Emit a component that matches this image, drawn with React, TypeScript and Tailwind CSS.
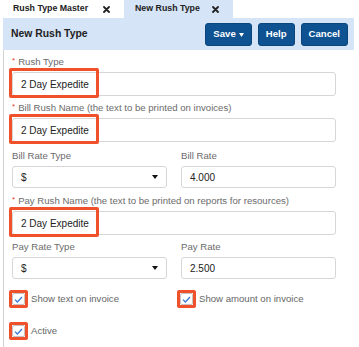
import React from "react";

const font = "font-['Liberation_Sans',Arial,sans-serif]";

function TabClose() {
    return (
        <svg width="7" height="7" viewBox="0 0 7 7" className="shrink-0">
            <path d="M1 1L6 6M6 1L1 6" stroke="#222" strokeWidth="1.8" strokeLinecap="round" />
        </svg>
    );
}

function Highlight({ className }: { className: string }) {
    return <div className={`absolute border-[3px] border-[#f0502a] rounded-[2px] pointer-events-none ${className}`} />;
}

function Label({ text, required }: { text: string; required?: boolean }) {
    return (
        <div className="h-[12px] leading-[12px] text-[9.6px] text-[#6b6b6b] mb-[4px] flex items-start">
            {required && <span className="text-[#e53935] text-[8px] leading-[10px] mr-[3px]">*</span>}
            <span>{text}</span>
        </div>
    );
}

function TextInput({ value, highlight, h = "h-[24px]" }: { value: string; highlight?: boolean; h?: string }) {
    return (
        <div className={`relative ${h} border border-[#d6d6d6] rounded-[3px] bg-white flex items-center pl-[8px] text-[10px] text-[#222]`}>
            {value}
            {highlight && <Highlight className="left-[-4px] top-[-5px] w-[90px] h-[30px]" />}
        </div>
    );
}

function Select({ value }: { value: string }) {
    return (
        <div className="h-[22px] border border-[#d6d6d6] rounded-[3px] bg-white flex items-center justify-between pl-[8px] pr-[8px] text-[10px] text-[#222]">
            <span>{value}</span>
            <svg width="6" height="4" viewBox="0 0 6 4">
                <path d="M0 0H6L3 4Z" fill="#111" />
            </svg>
        </div>
    );
}

function Checkbox({ label }: { label: string }) {
    return (
        <div className="flex items-center h-[18px]">
            <div className="relative w-[13px] h-[12px] border border-[#c4c4c4] rounded-[2px] bg-white flex items-center justify-center">
                <svg width="9" height="7" viewBox="0 0 9 7">
                    <path d="M1 3.6L3.4 6L8 1" stroke="#3a7bd5" strokeWidth="1.3" fill="none" />
                </svg>
                <Highlight className="left-[-4px] top-[-4px] w-[19px] h-[18px]" />
            </div>
            <span className="ml-[6px] text-[9.6px] text-[#666]">{label}</span>
        </div>
    );
}

function Button({ children }: { children: React.ReactNode }) {
    return (
        <button className="h-[23px] px-[7px] rounded-[3px] bg-[#0e5291] border border-[#0a457c] text-white text-[9.6px] font-bold flex items-center gap-[3px]">
            {children}
        </button>
    );
}

export default function App() {
    return (
        <div className={`w-[359px] h-[347px] bg-white overflow-hidden ${font}`}>
            {/* Tabs */}
            <div className="flex h-[18px]">
                <div className="w-[124px] flex items-center justify-between pl-[13px] pr-[14px] text-[8.8px] font-bold text-[#222]">
                    <span>Rush Type Master</span>
                    <TabClose />
                </div>
                <div className="w-[109px] bg-[#d5e4f7] flex items-center justify-between pl-[11px] pr-[14px] text-[8.8px] font-bold text-[#222]">
                    <span>New Rush Type</span>
                    <TabClose />
                </div>
            </div>

            <div className="ml-[3px] w-[351px]">
                {/* Header */}
                <div className="h-[32px] bg-[#d5e4f7] flex items-center justify-between pl-[8px] pr-[6px]">
                    <span className="text-[10.4px] font-bold text-[#222]">New Rush Type</span>
                    <div className="flex items-center gap-[6px] pt-[1px]">
                        <Button>
                            Save
                            <svg width="5" height="4" viewBox="0 0 5 4">
                                <path d="M0 0H5L2.5 4Z" fill="#fff" />
                            </svg>
                        </Button>
                        <Button>Help</Button>
                        <Button>Cancel</Button>
                    </div>
                </div>

                {/* Form */}
                <div className="border-l border-[#d2d2d2] h-[297px] pl-[8px] pr-[18px]">
                    <div className="pt-[6px]">
                        <Label text="Rush Type" required />
                        <TextInput value="2 Day Expedite" highlight />
                    </div>
                    <div className="mt-[6px]">
                        <Label text="Bill Rush Name (the text to be printed on invoices)" required />
                        <TextInput value="2 Day Expedite" highlight />
                    </div>
                    <div className="mt-[8px] grid grid-cols-2 gap-[14px]">
                        <div>
                            <Label text="Bill Rate Type" />
                            <Select value="$" />
                        </div>
                        <div>
                            <Label text="Bill Rate" />
                            <TextInput value="4.000" h="h-[22px]" />
                        </div>
                    </div>
                    <div className="mt-[7px]">
                        <Label text="Pay Rush Name (the text to be printed on reports for resources)" required />
                        <TextInput value="2 Day Expedite" highlight />
                    </div>
                    <div className="mt-[6px] grid grid-cols-2 gap-[14px]">
                        <div>
                            <Label text="Pay Rate Type" />
                            <Select value="$" />
                        </div>
                        <div>
                            <Label text="Pay Rate" />
                            <TextInput value="2.500" h="h-[22px]" />
                        </div>
                    </div>
                    <div className="mt-[11px] grid grid-cols-2 gap-[14px]">
                        <Checkbox label="Show text on invoice" />
                        <div className="-ml-[1px]">
                            <Checkbox label="Show amount on invoice" />
                        </div>
                    </div>
                    <div className="mt-[14px]">
                        <Checkbox label="Active" />
                    </div>
                </div>
            </div>
        </div>
    );
}
